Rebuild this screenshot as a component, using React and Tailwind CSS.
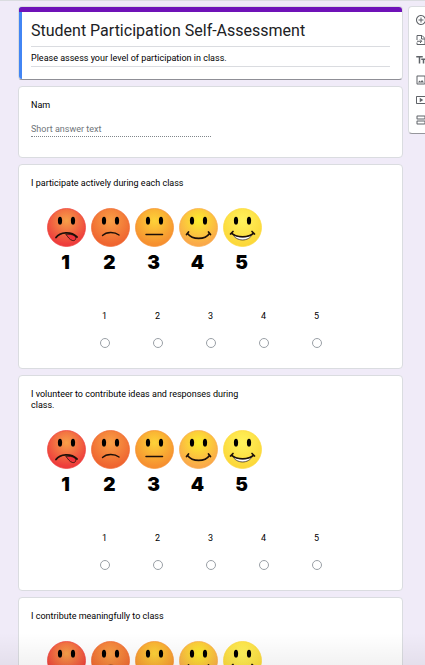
import {
  MdAddCircleOutline,
  MdTextFields,
  MdOutlineImage,
  MdOutlineSmartDisplay,
  MdOutlineViewAgenda,
} from "react-icons/md";
import { clsx } from "clsx";

const QUESTIONS = [
  {
    id: "participate",
    text: "I participate actively during each class",
    hasScale: true,
  },
  {
    id: "volunteer",
    text: "I volunteer to contribute ideas and responses during class.",
    hasScale: true,
  },
  { id: "contribute", text: "I contribute meaningfully to class" },
];

const FACES = [
  { value: 1, inner: "#f7a048", outer: "#ee3d3c" },
  { value: 2, inner: "#f9a046", outer: "#ef6530" },
  { value: 3, inner: "#fdd338", outer: "#f69030" },
  { value: 4, inner: "#fdee2c", outer: "#faa94a" },
  { value: 5, inner: "#fff35c", outer: "#fcd83a" },
];

// --- FLOATING TOOLBAR ---
function ImportIcon({ className }) {
  return (
    <svg viewBox="0 0 24 24" fill="none" stroke="currentColor" strokeWidth="2" className={className}>
      <path d="M4 12V3h10l6 6v12H4v-4" />
      <path d="M13 3v7h7M4 14.500h9M10 11l3.500 3.500L10 18" />
    </svg>
  );
}

const TOOLS = [
  { name: "Add question", icon: MdAddCircleOutline },
  { name: "Import questions", icon: ImportIcon },
  { name: "Add title and description", icon: MdTextFields },
  { name: "Add image", icon: MdOutlineImage },
  { name: "Add video", icon: MdOutlineSmartDisplay },
  { name: "Add section", icon: MdOutlineViewAgenda },
];

function Toolbar() {
  return (
    <aside className="w-[34px] -mr-[17px] shrink-0 self-start flex flex-col items-start gap-2 pl-1.5 py-[7px] bg-white rounded border border-[#dadce0] border-b-[#96969c]">
      {TOOLS.map((tool) => {
        const Icon = tool.icon;
        return (
          <button key={tool.name} type="button" aria-label={tool.name} className="text-[#5f6368]">
            <Icon className="block w-3 h-3" />
          </button>
        );
      })}
    </aside>
  );
}

// --- FACES ---
function Mouth({ value }) {
  switch (value) {
    case 1:
      return (
        <>
          <path d="M19 26.500c2 2.500 3.500 5.300 6.500 6 2.500.6 4-1.700 3-3.700-.7-1.500-2.500-2-4.500-2.300z" fill="#f0333c" strokeWidth="0.8" />
          <path d="M9 29.500c4-5.500 15-6.500 21-.5" strokeWidth="1.800" />
        </>
      );
    case 2:
      return <path d="M11.500 27.500c4-4 12-4 16.500-.5" strokeWidth="1.400" />;
    case 3:
      return <path d="M11 26.500h16.500" strokeWidth="1.500" />;
    case 4:
      return <path d="M8.500 25.500c5 6.500 17.500 6.500 22 0M7.500 26.500l2-2.500M31.500 26.500l-2-2.500" />;
    default:
      return (
        <>
          <path d="M9.500 26c5.500 4 14.500 4 20 0-3.500 8-16.500 8-20 0z" fill="#fff" strokeWidth="0.7" />
          <path d="M8.500 25c5 5 17.500 5 22 0M7.500 26l2.500-2.500M31.500 26l-2.500-2.500" />
        </>
      );
  }
}

function Face({ face, id }) {
  return (
    <svg viewBox="0 0 39 39" className="block w-[39px] h-[39px]" aria-hidden="true">
      <defs>
        <radialGradient id={id} cx="50%" cy="32%" r="62%">
          <stop offset="0%" stopColor={face.inner} />
          <stop offset="100%" stopColor={face.outer} />
        </radialGradient>
      </defs>
      <circle cx="19.5" cy="19.500" r="19" fill={`url(#${id})`} stroke={face.outer} strokeOpacity="0.7" />
      <ellipse cx="13" cy="12.700" rx="2.100" ry="3.900" />
      <ellipse cx="26" cy="12.700" rx="2.100" ry="3.900" />
      <g fill="none" stroke="#1c0f08" strokeWidth="1.700" strokeLinecap="round">
        <Mouth value={face.value} />
      </g>
    </svg>
  );
}

// --- CARDS ---
function Card({ className, children }) {
  return (
    <section className={clsx("bg-white rounded border border-[#dadce0] px-3", className)}>
      {children}
    </section>
  );
}

function HeaderCard() {
  return (
    <header className="relative overflow-hidden bg-white rounded border border-[#dadce0] border-b-[#8f8f96] px-3 pt-3 pb-3">
      <div className="absolute inset-y-0 left-0 w-[3px] bg-[#4285f4]" />
      <div className="absolute inset-x-0 top-0 h-[5px] bg-[#6f12b8]" />
      <h1 className="h-7 leading-6 border-b border-[#dadce0] text-base text-[#202124] whitespace-nowrap">
        Student Participation Self-Assessment
      </h1>
      <p className="h-5 pt-[5px] leading-3 border-b border-[#dadce0] text-[9px]">
        Please assess your level of participation in class.
      </p>
    </header>
  );
}

function NameCard() {
  return (
    <Card className="pt-3 pb-5">
      <label htmlFor="name" className="block text-[9px] leading-3">
        Nam
      </label>
      <input
        id="name"
        type="text"
        placeholder="Short answer text"
        className="block w-1/2 h-[15px] mt-[11px] text-[9px] leading-3 placeholder:text-[#70757a] border-b border-dotted border-[#80868b] outline-none"
      />
    </Card>
  );
}

function QuestionCard({ question }) {
  return (
    <Card className="pt-[13px] pb-5">
      <fieldset>
        <legend className="max-w-56 text-[9px] leading-[11px]">{question.text}</legend>
        <div className="flex gap-[5px] pl-4 mt-[19px]">
          {FACES.map((face) => (
            <div key={face.value} className="flex flex-col items-center">
              <Face face={face} id={`${question.id}-${face.value}`} />
              {question.hasScale && (
                <span className="mt-1 mr-0.5 text-[19px] leading-6 font-black font-[Inter,sans-serif] text-black">
                  {face.value}
                </span>
              )}
            </div>
          ))}
        </div>
        {question.hasScale && (
          <div className="flex pl-[47px] mt-[35px]">
            {FACES.map((face) => (
              <label key={face.value} className="w-[53px] flex flex-col items-center gap-4 text-[9px] leading-3">
                {face.value}
                <input
                  type="radio"
                  name={question.id}
                  value={face.value}
                  className="appearance-none block w-2.5 h-2.5 rounded-full border border-[#9aa0a6] checked:border-[#6f12b8] checked:border-[3px]"
                />
              </label>
            ))}
          </div>
        )}
      </fieldset>
    </Card>
  );
}

export default function App() {
  return (
    <div className="relative h-screen overflow-hidden border-t border-[#dadce0] bg-[#f0ebf8] font-[Roboto,sans-serif] text-black">
      <div className="flex gap-[5px] pl-[18px] pt-[5px]">
        <main className="flex-1 min-w-0 flex flex-col gap-1.5">
          <HeaderCard />
          <NameCard />
          {QUESTIONS.map((question) => (
            <QuestionCard key={question.id} question={question} />
          ))}
        </main>
        <Toolbar />
      </div>
      {/* Soft shade along the bottom edge */}
      <div className="absolute inset-x-0 bottom-0 h-8 bg-linear-to-b from-transparent to-black/5 pointer-events-none" />
    </div>
  );
}
